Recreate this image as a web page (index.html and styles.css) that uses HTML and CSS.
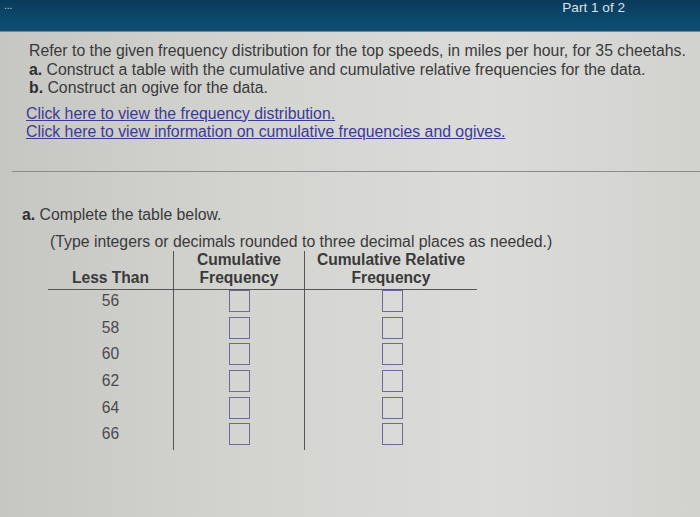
FILE: index.html
```html
<!DOCTYPE html>
<html>
<head>
<meta charset="utf-8">
<link rel="stylesheet" href="styles.css">
</head>
<body>
<div class="topbar">
  <span class="dots">...</span>
  <span class="part">Part 1 of 2</span>
</div>
<div class="page">
  <div class="question">
    <p class="line">Refer to the given frequency distribution for the top speeds, in miles per hour, for 35 cheetahs.</p>
    <p class="line"><b>a.</b> Construct a table with the cumulative and cumulative relative frequencies for the data.</p>
    <p class="line"><b>b.</b> Construct an ogive for the data.</p>
    <div class="links">
      <a class="link">Click here to view the frequency distribution.</a>
      <a class="link">Click here to view information on cumulative frequencies and ogives.</a>
    </div>
  </div>
  <hr class="divider">
  <div class="answer">
    <p class="line"><b>a.</b> Complete the table below.</p>
    <p class="note">(Type integers or decimals rounded to three decimal places as needed.)</p>
    <table class="freq">
      <thead>
        <tr>
          <th class="c1">Less Than</th>
          <th class="c2">Cumulative<br>Frequency</th>
          <th class="c3">Cumulative Relative<br>Frequency</th>
        </tr>
      </thead>
      <tbody>
        <tr><td class="c1">56</td><td class="c2"><span class="box"></span></td><td class="c3"><span class="box"></span></td></tr>
        <tr><td class="c1">58</td><td class="c2"><span class="box"></span></td><td class="c3"><span class="box"></span></td></tr>
        <tr><td class="c1">60</td><td class="c2"><span class="box"></span></td><td class="c3"><span class="box"></span></td></tr>
        <tr><td class="c1">62</td><td class="c2"><span class="box"></span></td><td class="c3"><span class="box"></span></td></tr>
        <tr><td class="c1">64</td><td class="c2"><span class="box"></span></td><td class="c3"><span class="box"></span></td></tr>
        <tr><td class="c1">66</td><td class="c2"><span class="box"></span></td><td class="c3"><span class="box"></span></td></tr>
      </tbody>
    </table>
  </div>
</div>
</body>
</html>
```
FILE: styles.css
```css
html, body {
  margin: 0;
  padding: 0;
}
body {
  width: 700px;
  height: 517px;
  overflow: hidden;
  font-family: "Liberation Sans", Arial, sans-serif;
  color: #3a3a3a;
  background: linear-gradient(90deg, #c6c6c3 0%, #d3d3d0 35%, #dbdbd9 70%, #d2d2cf 100%);
}
.topbar {
  height: 31px;
  background: linear-gradient(180deg, #0a3a5a 0%, #0d4a70 70%, #0e4e74 100%);
  position: relative;
  display: flex;
  justify-content: flex-end;
  align-items: flex-start;
  border-bottom: 1px solid #6f8796;
}
.dots {
  position: absolute;
  left: 4px;
  top: 0;
  color: #c8d4dc;
  font-size: 10px;
  line-height: 11px;
}
.part {
  color: #d9e2e8;
  font-size: 13.6px;
  line-height: 15px;
  margin-top: 0px;
  margin-right: 75px;
}
.page {
  padding: 10px 0 0 0;
}
.question {
  padding-left: 29px;
}
.line {
  margin: 0;
  font-size: 15.8px;
  line-height: 18.5px;
}
.line b {
  font-weight: bold;
  color: #2e2e2e;
}
.links {
  margin-top: 7px;
  display: flex;
  flex-direction: column;
  margin-left: -3px;
}
.link {
  font-size: 15.8px;
  line-height: 18px;
  color: #3d3a96;
  text-decoration: underline;
}
.divider {
  margin: 30px 0 0 12px;
  border: 0;
  border-top: 1px solid #8a8a88;
  height: 0;
}
.answer {
  padding: 34px 0 0 22px;
}
.note {
  margin: 9px 0 0 28px;
  font-size: 15.8px;
  line-height: 18px;
}
.freq {
  margin-left: 26px;
  border-collapse: collapse;
  font-size: 15.6px;
}
.freq th {
  font-weight: bold;
  color: #3a3a3a;
  line-height: 18px;
  padding: 0 0 2px 0;
  vertical-align: bottom;
  border-bottom: 1px solid #555;
}
.freq .c1 { width: 125px; text-align: center; }
.freq .c2 { width: 130px; text-align: center; border-left: 1px solid #555; }
.freq .c3 { width: 172px; text-align: center; border-left: 1px solid #555; }
.freq td {
  height: 22.6px;
  padding: 0 0 4px 0;
  color: #4a4a4a;
  vertical-align: middle;
  line-height: 18px;
}
.box {
  display: inline-block;
  width: 19px;
  height: 20px;
  border: 1px solid #6c6a98;
  vertical-align: middle;
  background: rgba(255,255,255,0.06);
}
.freq td.c3 .box { margin-left: 3px; }
```
